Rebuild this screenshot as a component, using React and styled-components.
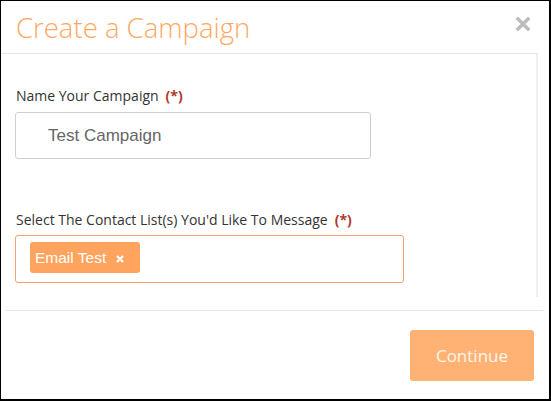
import React from "react";
import styled, { createGlobalStyle } from "styled-components";

const Global = createGlobalStyle`
  html, body { margin: 0; padding: 0; background: #fff; }
  * { box-sizing: border-box; }
`;

const Frame = styled.div`
  width: 551px;
  height: 401px;
  background: #fff;
  border-top: 1px solid #000;
  border-left: 1px solid #000;
  border-right: 2px solid #000;
  border-bottom: 2px solid #000;
  display: flex;
  flex-direction: column;
  font-family: "Open Sans", sans-serif;
`;

const Header = styled.div`
  height: 52px;
  display: flex;
  align-items: center;
  justify-content: space-between;
  padding: 0 19px 0 15px;
`;

const Title = styled.h1`
  margin: 0;
  font-family: "Open Sans", sans-serif;
  font-weight: 300;
  font-size: 27.5px;
  color: #ffa863;
  line-height: 1;
  padding-top: 2px;
`;

const CloseIcon = styled.svg`
  width: 14px;
  height: 14px;
  margin-top: -6px;
  display: block;
`;

const Body = styled.div`
  width: 537px;
  height: 244px;
  border-top: 1px solid #e5e5e5;
  border-right: 2px solid #efefef;
  padding: 32px 0 0 14px;
  display: flex;
  flex-direction: column;
`;

const Label = styled.label`
  font-size: 14px;
  line-height: 20px;
  color: #333;
  display: flex;
  gap: 7px;
  margin-top: ${(p) => p.$mt || 0}px;
  padding-left: 1px;
`;

const Req = styled.span`
  color: #b0392b;
  font-weight: 700;
`;

const TextBox = styled.div`
  width: 356px;
  height: 47px;
  margin-top: 6px;
  border: 1px solid #cfcfcf;
  border-radius: 3px;
  display: flex;
  align-items: center;
  padding-left: 32px;
  font-family: "Liberation Sans", Arial, sans-serif;
  font-size: 17px;
  color: #666;
`;

const SelectBox = styled.div`
  width: 389px;
  height: 48px;
  margin-top: 5px;
  border: 1px solid #f3a46c;
  border-radius: 3px;
  display: flex;
  align-items: flex-start;
  padding: 6px 0 0 14px;
`;

const Tag = styled.span`
  height: 31px;
  background: #ffa45e;
  border-radius: 3px;
  display: inline-flex;
  align-items: center;
  padding: 0 16px 0 5px;
  gap: 10px;
  font-family: "Liberation Sans", Arial, sans-serif;
  font-size: 15.5px;
  color: #fff;
`;

const TagX = styled.svg`
  width: 8px;
  height: 8px;
  display: block;
  margin-top: 2px;
`;

const Footer = styled.div`
  margin: 13px 6px 0 5px;
  border-top: 1px solid #e5e5e5;
  flex: 1;
  display: flex;
  justify-content: flex-end;
  align-items: flex-start;
  padding: 19px 9px 0 0;
`;

const Button = styled.button`
  width: 124px;
  height: 51px;
  border: none;
  border-radius: 3px;
  background: #ffb273;
  color: #fff6ec;
  font-family: "Open Sans", sans-serif;
  font-weight: 400;
  font-size: 17px;
  cursor: pointer;
`;

export default function App() {
  return (
    <>
      <Global />
      <Frame>
        <Header>
          <Title>Create a Campaign</Title>
          <CloseIcon viewBox="0 0 14 14">
            <path d="M2 2 L12 12 M12 2 L2 12" stroke="#bcbcbc" strokeWidth="3.4" strokeLinecap="square" />
          </CloseIcon>
        </Header>
        <Body>
          <Label>
            Name Your Campaign <Req>(*)</Req>
          </Label>
          <TextBox>Test Campaign</TextBox>
          <Label $mt={51}>
            Select The Contact List(s) You'd Like To Message <Req>(*)</Req>
          </Label>
          <SelectBox>
            <Tag>
              Email Test
              <TagX viewBox="0 0 8 8">
                <path d="M1 1 L7 7 M7 1 L1 7" stroke="#fff" strokeWidth="2.2" strokeLinecap="butt" />
              </TagX>
            </Tag>
          </SelectBox>
        </Body>
        <Footer>
          <Button>Continue</Button>
        </Footer>
      </Frame>
    </>
  );
}
